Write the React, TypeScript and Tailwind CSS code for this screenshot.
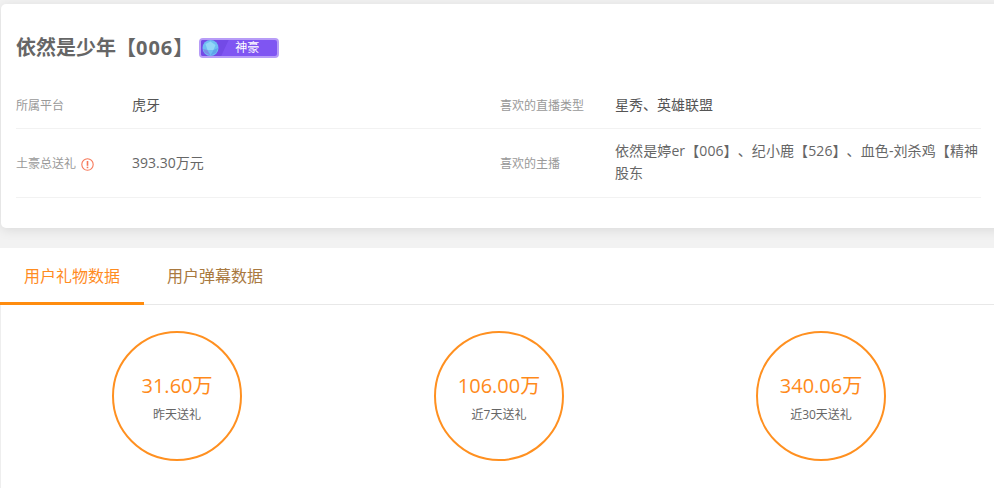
const font = "font-['Open_Sans','Noto_Sans_CJK_SC',sans-serif] [text-spacing-trim:space-all]";

function Badge() {
  return (
    <div className="ml-[6px] w-[80px] h-[20px] rounded-[4px] border-2 border-[#b79cf7] bg-[#7f55f2] flex items-center relative overflow-hidden">
      <div className="absolute left-[-8px] top-[-2px] h-[24px] w-[31px] bg-[#734ae6] -skew-x-[25deg]" />
      <svg width="17" height="16" viewBox="0 0 17 16" className="ml-[1px] relative">
        <circle cx="8.5" cy="8" r="8" fill="#6fbdf2" />
        <path d="M3.5 4 L8.5 1.5 L13.5 5 L11.5 10 L5.5 10 Z" fill="#93d6f7" />
        <path d="M1 9 L5.5 10 L8.5 15.5 L3 13 Z" fill="#7b8fe8" />
        <path d="M11.5 10 L16 8 L14 13 L8.5 15.5 Z" fill="#5fa4ea" />
      </svg>
      <span className="absolute left-[33px] w-[26px] text-center text-[12px] leading-[16px] text-white whitespace-nowrap">神豪</span>
    </div>
  );
}

function Alert() {
  return (
    <svg width="13" height="13" viewBox="0 0 13 13" className="ml-[5px]">
      <circle cx="6.5" cy="6.5" r="5.7" fill="none" stroke="#f7795a" strokeWidth="1.1" />
      <rect x="5.7" y="3" width="1.6" height="4.8" fill="#f7795a" />
      <rect x="5.7" y="8.7" width="1.6" height="1.5" fill="#f7795a" />
    </svg>
  );
}

function Stat({ value, label }: { value: string; label: string }) {
  return (
    <div className="flex justify-center">
      <div className="w-[130px] h-[130px] rounded-full border-2 border-[#ff9020] flex flex-col items-center">
        <div className="mt-[39px] text-[20px] leading-[28px] text-[#ff8a1a]">{value}</div>
        <div className="mt-[6px] text-[12px] leading-[18px] text-[#666666]">{label}</div>
      </div>
    </div>
  );
}

export default function App() {
  return (
    <div className={`h-[488px] w-[994px] overflow-hidden bg-[#f2f2f2] pt-1 ${font}`}>
      <div className="ml-px h-[224px] w-[1010px] rounded-[5px] bg-white pl-[15px] shadow-[0_2px_12px_rgba(0,0,0,0.1)]">
        <div className="flex items-center h-[78px] pt-[10px]">
          <h1 className="text-[20px] leading-[28px] font-bold text-[#666666] whitespace-nowrap">依然是少年【<span className="tracking-[1px]">006</span>】</h1>
          <Badge />
        </div>
        <div className="w-[965px]">
          <div className="flex h-[47px] items-center border-b border-[#f2f2f2]">
            <div className="w-[116px] pt-[2px] text-[12px] text-[#999999]">所属平台</div>
            <div className="w-[368px] pb-[2px] text-[14px] text-[#555555]">虎牙</div>
            <div className="w-[115px] pt-[2px] text-[12px] text-[#999999]">喜欢的直播类型</div>
            <div className="pb-[2px] text-[14px] text-[#555555]">星秀、英雄联盟</div>
          </div>
          <div className="flex h-[69px] items-center border-b border-[#f2f2f2]">
            <div className="w-[116px] pt-[2px] text-[12px] text-[#999999] flex items-center">土豪总送礼<Alert /></div>
            <div className="w-[368px] pb-[2px] text-[14px] text-[#666666]">393.30万元</div>
            <div className="w-[115px] pt-[2px] text-[12px] text-[#999999]">喜欢的主播</div>
            <div className="w-[366px] pb-[2px] text-[14px] leading-[22px] tracking-[0.1px] text-[#666666]">依然是婷er【006】、纪小鹿【526】、血色-刘杀鸡【精神股东</div>
          </div>
        </div>
      </div>
      <div className="mt-5 h-[240px] bg-white">
        <div className="flex h-[57px] border-b border-[#e8e8e8]">
          <div className="w-[144px] h-[57px] border-b-[3px] border-[#ff8c0f] text-center text-[16px] leading-[56px] text-[#ff8c1f]">用户礼物数据</div>
          <div className="w-[142px] text-center text-[16px] leading-[56px] text-[#a9793f]">用户弹幕数据</div>
        </div>
        <div className="h-[183px] border-l border-[#eeeeee]">
          <div className="grid w-[966px] grid-cols-3 ml-[15px] pt-[26px]">
            <Stat value="31.60万" label="昨天送礼" />
            <Stat value="106.00万" label="近7天送礼" />
            <Stat value="340.06万" label="近30天送礼" />
          </div>
        </div>
      </div>
    </div>
  );
}
